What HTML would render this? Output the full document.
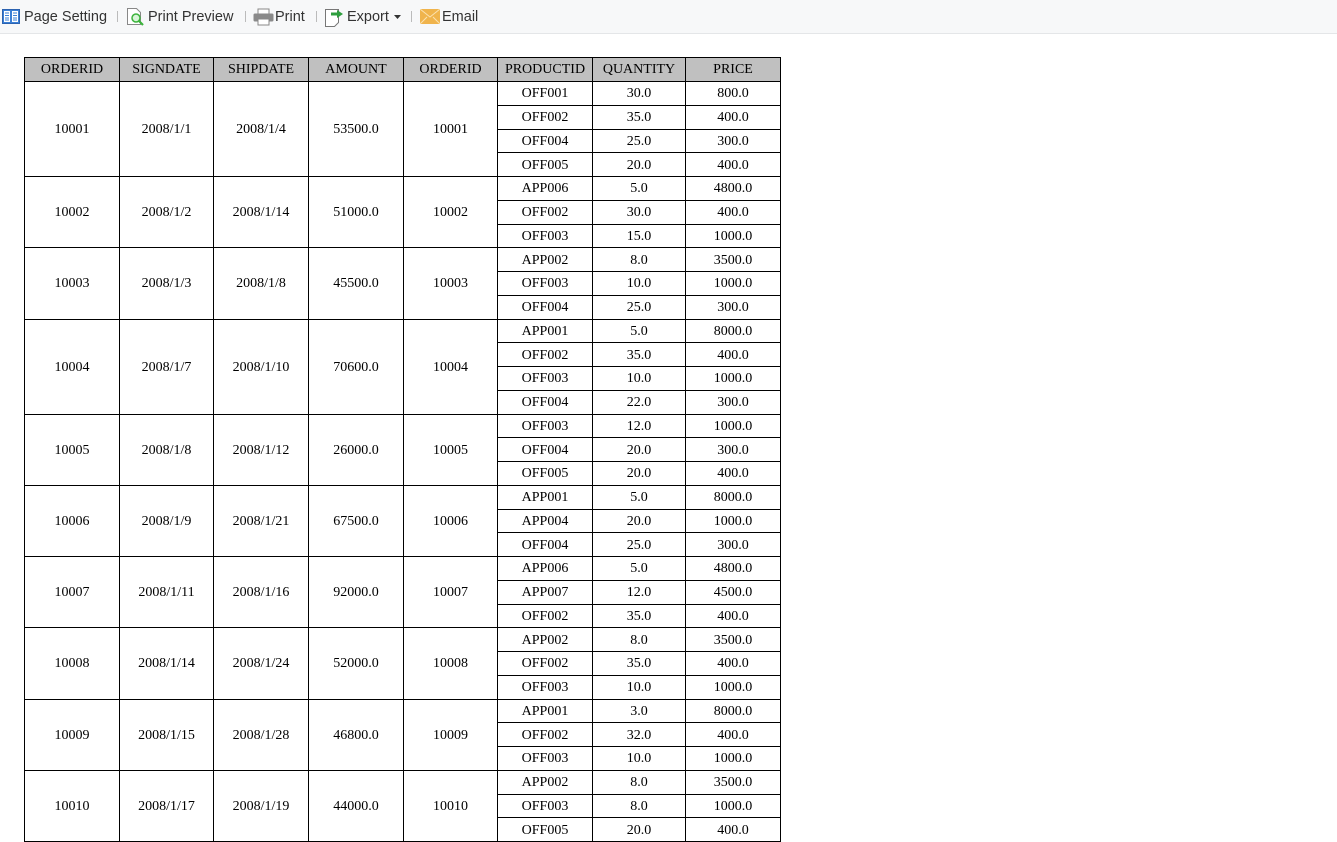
<!DOCTYPE html>
<html><head><meta charset="utf-8"><style>
html,body{margin:0;padding:0;background:#fff;width:1337px;height:842px;overflow:hidden}
.tb{position:absolute;left:0;top:0;width:1337px;height:33px;background:#f7f8f9;border-bottom:1px solid #e4e6e8;font-family:"Liberation Sans",Arial,sans-serif;font-size:14.5px;color:#333}
.it{position:absolute;top:8px;line-height:18px;white-space:nowrap}
.sep{position:absolute;top:11px;width:1px;height:11px;background:#bbb}
table{position:absolute;left:24px;top:57px;border-collapse:collapse;table-layout:fixed;font-family:"Liberation Serif","Times New Roman",serif;font-size:14px;color:#000}
td{border:1px solid #000;text-align:center;padding:2px 0 0 0;height:20.75px;line-height:16px}
th{border:1px solid #000;background:#c0c0c0;font-weight:normal;height:22px;padding:1px 0 0 0}
</style></head><body>
<div class="tb">
<svg style="position:absolute;left:2px;top:9px" width="18" height="15" viewBox="0 0 18 15"><rect x="0.5" y="0.5" width="17" height="14" fill="#3a7fd5" stroke="#2b62b0"/><rect x="2" y="2" width="6" height="11" fill="#fff"/><rect x="10" y="2" width="6" height="11" fill="#fff"/><path d="M3 4h4M3 6.5h4M3 9h4M3 11h4M11 4h4M11 6.5h4M11 9h4M11 11h4" stroke="#3a7fd5"/></svg>
<span class="it" style="left:24px">Page Setting</span>
<div class="sep" style="left:117px"></div>
<svg style="position:absolute;left:126px;top:7px" width="20" height="20" viewBox="0 0 20 20"><path d="M1.5 1.5h9l4 4v12h-13z" fill="#fff" stroke="#888"/><circle cx="10" cy="11" r="4" fill="#d9f5d9" stroke="#3bb33b" stroke-width="1.5"/><path d="M13 14l4 4" stroke="#3bb33b" stroke-width="2.2"/></svg>
<span class="it" style="left:148px">Print Preview</span>
<div class="sep" style="left:245px"></div>
<svg style="position:absolute;left:253px;top:8px" width="21" height="18" viewBox="0 0 21 18"><rect x="5" y="1" width="11" height="5" fill="#fff" stroke="#888"/><rect x="0.5" y="5.5" width="20" height="8" rx="1.5" fill="#8a8a8a"/><rect x="5" y="11" width="11" height="6" fill="#fff" stroke="#888"/></svg>
<span class="it" style="left:275px">Print</span>
<div class="sep" style="left:316px"></div>
<svg style="position:absolute;left:324px;top:6px" width="20" height="22" viewBox="0 0 20 22"><path d="M1.5 3.5h13v13l-4 4h-9z" fill="#fff" stroke="#777"/><path d="M7 8h8" stroke="#2e9e3e" stroke-width="3"/><path d="M13 4l6 4-6 4z" fill="#2e9e3e"/></svg>
<span class="it" style="left:347px">Export</span>
<svg style="position:absolute;left:394px;top:15px" width="8" height="5"><path d="M0 0h7l-3.5 4z" fill="#333"/></svg>
<div class="sep" style="left:411px"></div>
<svg style="position:absolute;left:420px;top:9px" width="20" height="15" viewBox="0 0 20 15"><rect width="20" height="15" fill="#f0b44c"/><path d="M0 0l10 8 10-8M0 15l7-7M20 15l-7-7" stroke="#fbe2b0" fill="none"/></svg>
<span class="it" style="left:442px">Email</span>
</div>
<table>
<colgroup><col style="width:95px"><col style="width:94px"><col style="width:95px"><col style="width:95px"><col style="width:94px"><col style="width:95px"><col style="width:93px"><col style="width:95px"></colgroup>
<tr><th>ORDERID</th><th>SIGNDATE</th><th>SHIPDATE</th><th>AMOUNT</th><th>ORDERID</th><th>PRODUCTID</th><th>QUANTITY</th><th>PRICE</th></tr>
<tr><td rowspan="4">10001</td><td rowspan="4">2008/1/1</td><td rowspan="4">2008/1/4</td><td rowspan="4">53500.0</td><td rowspan="4">10001</td><td>OFF001</td><td>30.0</td><td>800.0</td></tr>
<tr><td>OFF002</td><td>35.0</td><td>400.0</td></tr>
<tr><td>OFF004</td><td>25.0</td><td>300.0</td></tr>
<tr><td>OFF005</td><td>20.0</td><td>400.0</td></tr>
<tr><td rowspan="3">10002</td><td rowspan="3">2008/1/2</td><td rowspan="3">2008/1/14</td><td rowspan="3">51000.0</td><td rowspan="3">10002</td><td>APP006</td><td>5.0</td><td>4800.0</td></tr>
<tr><td>OFF002</td><td>30.0</td><td>400.0</td></tr>
<tr><td>OFF003</td><td>15.0</td><td>1000.0</td></tr>
<tr><td rowspan="3">10003</td><td rowspan="3">2008/1/3</td><td rowspan="3">2008/1/8</td><td rowspan="3">45500.0</td><td rowspan="3">10003</td><td>APP002</td><td>8.0</td><td>3500.0</td></tr>
<tr><td>OFF003</td><td>10.0</td><td>1000.0</td></tr>
<tr><td>OFF004</td><td>25.0</td><td>300.0</td></tr>
<tr><td rowspan="4">10004</td><td rowspan="4">2008/1/7</td><td rowspan="4">2008/1/10</td><td rowspan="4">70600.0</td><td rowspan="4">10004</td><td>APP001</td><td>5.0</td><td>8000.0</td></tr>
<tr><td>OFF002</td><td>35.0</td><td>400.0</td></tr>
<tr><td>OFF003</td><td>10.0</td><td>1000.0</td></tr>
<tr><td>OFF004</td><td>22.0</td><td>300.0</td></tr>
<tr><td rowspan="3">10005</td><td rowspan="3">2008/1/8</td><td rowspan="3">2008/1/12</td><td rowspan="3">26000.0</td><td rowspan="3">10005</td><td>OFF003</td><td>12.0</td><td>1000.0</td></tr>
<tr><td>OFF004</td><td>20.0</td><td>300.0</td></tr>
<tr><td>OFF005</td><td>20.0</td><td>400.0</td></tr>
<tr><td rowspan="3">10006</td><td rowspan="3">2008/1/9</td><td rowspan="3">2008/1/21</td><td rowspan="3">67500.0</td><td rowspan="3">10006</td><td>APP001</td><td>5.0</td><td>8000.0</td></tr>
<tr><td>APP004</td><td>20.0</td><td>1000.0</td></tr>
<tr><td>OFF004</td><td>25.0</td><td>300.0</td></tr>
<tr><td rowspan="3">10007</td><td rowspan="3">2008/1/11</td><td rowspan="3">2008/1/16</td><td rowspan="3">92000.0</td><td rowspan="3">10007</td><td>APP006</td><td>5.0</td><td>4800.0</td></tr>
<tr><td>APP007</td><td>12.0</td><td>4500.0</td></tr>
<tr><td>OFF002</td><td>35.0</td><td>400.0</td></tr>
<tr><td rowspan="3">10008</td><td rowspan="3">2008/1/14</td><td rowspan="3">2008/1/24</td><td rowspan="3">52000.0</td><td rowspan="3">10008</td><td>APP002</td><td>8.0</td><td>3500.0</td></tr>
<tr><td>OFF002</td><td>35.0</td><td>400.0</td></tr>
<tr><td>OFF003</td><td>10.0</td><td>1000.0</td></tr>
<tr><td rowspan="3">10009</td><td rowspan="3">2008/1/15</td><td rowspan="3">2008/1/28</td><td rowspan="3">46800.0</td><td rowspan="3">10009</td><td>APP001</td><td>3.0</td><td>8000.0</td></tr>
<tr><td>OFF002</td><td>32.0</td><td>400.0</td></tr>
<tr><td>OFF003</td><td>10.0</td><td>1000.0</td></tr>
<tr><td rowspan="3">10010</td><td rowspan="3">2008/1/17</td><td rowspan="3">2008/1/19</td><td rowspan="3">44000.0</td><td rowspan="3">10010</td><td>APP002</td><td>8.0</td><td>3500.0</td></tr>
<tr><td>OFF003</td><td>8.0</td><td>1000.0</td></tr>
<tr><td>OFF005</td><td>20.0</td><td>400.0</td></tr>
</table>
</body></html>
